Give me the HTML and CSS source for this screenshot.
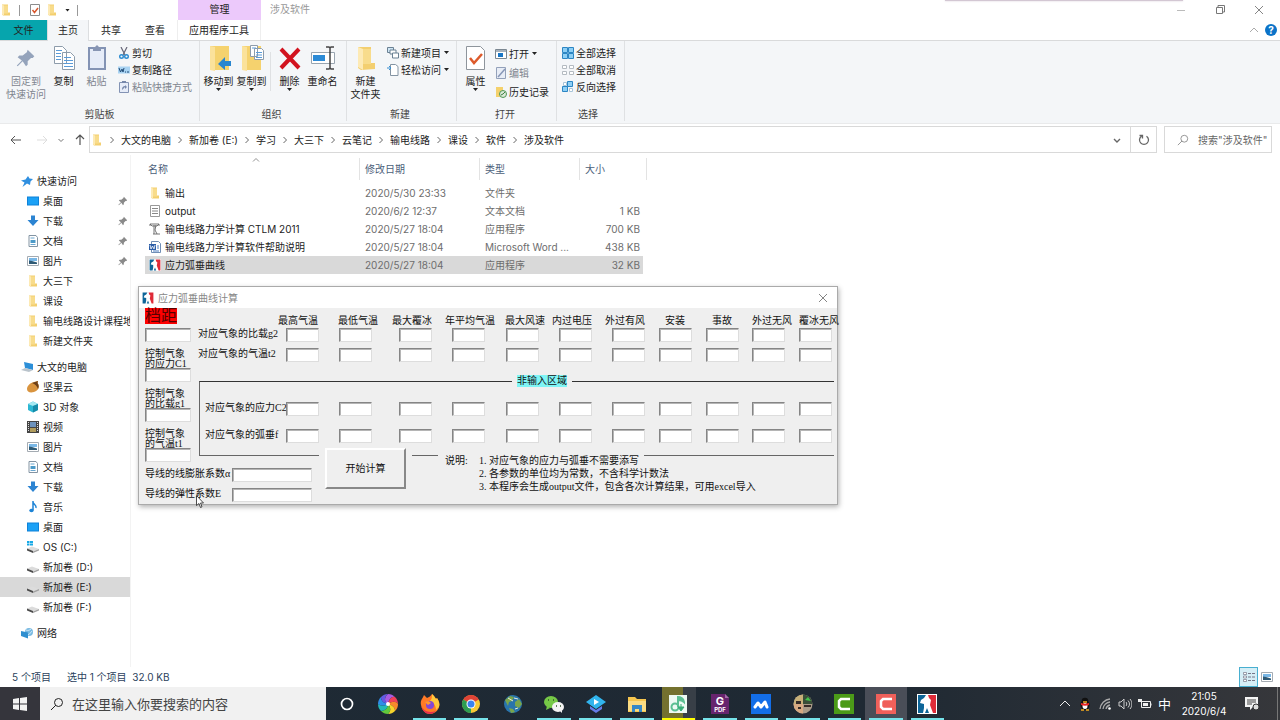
FILE: index.html
```html
<!DOCTYPE html>
<html lang="zh-CN">
<head>
    <meta charset="UTF-8">
    <meta name="viewport" content="width=device-width, initial-scale=1.0">
    <title>涉及软件</title>
    <link rel="stylesheet" href="styles.css">
</head>
<body>
    <!-- Shared icons -->
    <svg class="sprite" aria-hidden="true">
        <symbol id="folder" viewBox="0 0 12 12"><path d="M2 .5h6v8h2v3H3l-1-1z" fill="#f3cf70"/><path d="M2 .5l2 1v10l-2-1z" fill="#fdeab5"/><path d="M4 1.500h4v8H4z" fill="#f8dc8c"/></symbol>
        <symbol id="pin" viewBox="0 0 12 12"><path d="M7 1l4 4-1 1h-1L7 8v2L6 11 4 8 1 11l-.5-.5L3.500 7.500 1 5.500 2 4.500h2L6.500 2.500z" fill="currentColor"/></symbol>
        <symbol id="star" viewBox="0 0 12 12"><path d="M7 1l1.500 2.500L12 4 9.500 6.500 9 10 6 8.500 1.500 12l2-4.500L0 5.500l4.500-1z" fill="#2f8fe0"/></symbol>
        <symbol id="desktop" viewBox="0 0 12 12"><path d="M0 1.500h12v9H0z" fill="#0f82d8"/><path d="M1 2.500h10v7H1z" fill="#1ba1f6"/></symbol>
        <symbol id="down" viewBox="0 0 12 12"><path d="M4 .5h4V5h3.500L6 11 .5 5H4z" fill="#2c84d2"/></symbol>
        <symbol id="doc" viewBox="0 0 12 12"><path d="M2 .5h7l1.500 2v9H2z" fill="#fff" stroke="#8394a3"/><path d="M3.500 3h4M3.500 9.500h5" stroke="#6aa7d0"/><path d="M3.500 5h5v3h-5z" fill="#4c9ac8"/></symbol>
        <symbol id="pic" viewBox="0 0 12 12"><path d="M.5 1.500h11v9H.5z" fill="#fff" stroke="#a4abb2"/><path d="M2 3h8v3H2z" fill="#79b7e6"/><path d="M2 5.500l3 .5 5 1.500V9H2z" fill="#2f5a75"/></symbol>
        <symbol id="drive" viewBox="0 0 12 12"><path d="M0 7.500l5-2 7 2.500-6 2.500z" fill="#dcdcdc"/><path d="M0 7.500L6 10v2L0 9.500z" fill="#4c4c4c"/><path d="M6 10.500L12 8v1.500L6 12z" fill="#a2a2a2"/></symbol>
        <symbol id="nba" viewBox="0 0 20 20"><path d="M0 0h20v20H0z" fill="#fff"/><path d="M1 1h8L7 4 4 6 3 9l4 1v4l-1 5H1z" fill="#0d6598"/><path d="M11 1h8v18h-3l-3-8 1-5-2-2z" fill="#df2b38"/><path d="M8 19l2-5 2 5z" fill="#0d6598"/></symbol>
        <symbol id="chev" viewBox="0 0 6 8"><path d="M1.500 1l3 3-3 3" fill="none" stroke="#666"/></symbol>
        <symbol id="x" viewBox="0 0 10 10"><path d="M1 1l8 8M9 1l-8 8" stroke="#777" fill="none" stroke-width=".9"/></symbol>
        <symbol id="lens" viewBox="0 0 14 14"><path d="M1 13l5-5" stroke="currentColor"/><circle cx="8.500" cy="5.500" r="4" fill="none" stroke="currentColor"/></symbol>
    </svg>

    <div class="top-strip"></div>

    <!-- Title bar -->
    <header class="titlebar">
        <div class="quick">
            <svg class="i12"><use href="#folder"/></svg>
            <i class="bar"></i>
            <svg class="i12" viewBox="0 0 12 12"><path d="M1.500.5h9v11h-9z" fill="#fff" stroke="#8c8c8c"/><path d="M3.500 6l2 2.500L9 4" fill="none" stroke="#d8562c" stroke-width="1.500"/></svg>
            <svg class="i12"><use href="#folder"/></svg>
            <i class="tri"></i>
            <i class="bar"></i>
        </div>
        <div class="manage">管理</div>
        <h1>涉及软件</h1>
        <div class="win-buttons">
            <button aria-label="最小化"><svg class="i10" viewBox="0 0 10 10"><path d="M1 5.500h8" stroke="#bbb"/></svg></button>
            <button aria-label="还原"><svg class="i10" viewBox="0 0 10 10"><path d="M1.500 2.500h6v6h-6zM3 2V.5h6.500V7H8" fill="none" stroke="#777"/></svg></button>
            <button aria-label="关闭"><svg class="i10"><use href="#x"/></svg></button>
        </div>
    </header>
    <nav class="tabs">
        <button class="tab file">文件</button>
        <button class="tab active">主页</button>
        <button class="tab">共享</button>
        <button class="tab">查看</button>
        <button class="tab tools">应用程序工具</button>
        <div class="tab-right">
            <svg class="i10" viewBox="0 0 10 10"><path d="M1 7l4-4 4 4" fill="none" stroke="#aaa"/></svg>
            <button class="help" aria-label="帮助">?</button>
        </div>
    </nav>

    <!-- Ribbon -->
    <section class="ribbon">
        <div class="group g-clip">
            <div class="tools-row">
                <button class="big wide off"><svg viewBox="0 0 12 12" class="i20"><use href="#pin"/></svg>固定到<br>快速访问</button>
                <button class="big"><svg viewBox="0 0 24 28"><path d="M2.500 2.500h8l4 4v13h-12zM10.500 8.500h8l4 4v13h-12z" fill="#fff" stroke="#8d9cab"/><path d="M4 6.500h6M4 9.500h5M4 12.500h5M4 15.500h5M12 13.500h7M12 16.500h9M12 19.500h9M12 22.500h9" stroke="#5a9bd8"/></svg>复制</button>
                <button class="big off"><svg viewBox="0 0 24 28"><path d="M4 4h16v21H4z" fill="#e6ecf8" stroke="#8393b4" stroke-width="2"/><path d="M8 3h2l2-2 2 2h2v4H8z" fill="#8795b3"/></svg>粘贴</button>
                <div class="small-col">
                    <button class="small"><svg class="i12" viewBox="0 0 12 12"><path d="M3 0l4 8M9 0L5 8" stroke="#667" stroke-width="1.200"/><circle cx="3.500" cy="9.500" r="1.800" fill="none" stroke="#2b8bd0" stroke-width="1.400"/><circle cx="8.500" cy="9.500" r="1.800" fill="none" stroke="#2b8bd0" stroke-width="1.400"/></svg>剪切</button>
                    <button class="small"><svg class="i12" viewBox="0 0 12 12"><path d="M0 2.500h12v7H0z" fill="#a9d3f2"/><path d="M1 4l1.500 4L4 5l1 3 1-4M7 8h1M9 8h2" fill="none" stroke="#234d78"/></svg>复制路径</button>
                    <button class="small off"><svg class="i12" viewBox="0 0 12 12"><path d="M1.500 1.500h9v10h-9z" fill="#e6ecf8" stroke="#8393b4"/><path d="M4 0h4v2H4zM4 9c0-3 1-4 3-4V4l2 2-2 2V6" fill="#7788ab"/></svg>粘贴快捷方式</button>
                </div>
            </div>
            <div class="group-name">剪贴板</div>
        </div>
        <div class="group g-org">
            <div class="tools-row">
                <button class="big"><svg viewBox="0 0 24 28"><path d="M3 2h19v24H3z" fill="#f5d26e"/><path d="M3 2l5 1v24l-5-1z" fill="#fbe29b"/><path d="M24 17h-6v-4l-7 7 7 6v-4h6z" fill="#2986cf"/></svg>移动到<i class="tri"></i></button>
                <button class="big"><svg viewBox="0 0 24 28"><path d="M2 2h19v24H2z" fill="#f5d26e"/><path d="M2 2l5 1v24l-5-1z" fill="#fbe29b"/><path d="M10.500 1.500h7v11h-7zM14.500 4.500h7l2 2v9h-9z" fill="#fff" stroke="#8d9cab"/><path d="M16 8.500h6M16 11h6M16 13.500h6M12 4h4" stroke="#5a9bd8"/></svg>复制到<i class="tri"></i></button>
                <i class="ribbon-sep"></i>
                <button class="big"><svg viewBox="0 0 24 28"><path d="M3 5l18 19M21 5L3 24" stroke="#d2131f" stroke-width="4"/></svg>删除<i class="tri"></i></button>
                <button class="big"><svg viewBox="0 0 24 28"><path d="M.5 8.500h23v11H.5z" fill="#fff" stroke="#99a5b0"/><path d="M2 11h12v6H2z" fill="#2b8ad6"/><path d="M15 3h3l1 1 1-1h3M15 25h3l1-1 1 1h3M19 4v20" fill="none" stroke="#444" stroke-width="1.500"/></svg>重命名</button>
            </div>
            <div class="group-name">组织</div>
        </div>
        <div class="group g-new">
            <div class="tools-row">
                <button class="big"><svg viewBox="0 0 24 28"><path d="M4 3h13v16h4v6l-14 1-3-2z" fill="#f3cf70"/><path d="M4 3l5 2v21l-5-3z" fill="#fdeab5"/><path d="M9 5h8v15H9z" fill="#f8dc8c"/></svg>新建<br>文件夹</button>
                <div class="small-col">
                    <button class="small"><svg class="i12" viewBox="0 0 12 12"><path d="M.5.5h6v5h-6z" fill="#cfe6f5" stroke="#6b8193"/><path d="M3 3h6v4H3z" fill="#fff" stroke="#6b8193"/><path d="M5.500 6h6v5h-6z" fill="#fff" stroke="#6b8193"/></svg>新建项目<i class="tri"></i></button>
                    <button class="small"><svg class="i12" viewBox="0 0 12 12"><path d="M3.500.5h5l2.500 2v9H3.500z" fill="#fff" stroke="#8494a3"/><path d="M0 4h4M2 2l2 2-2 2" fill="none" stroke="#3a8fd0"/></svg>轻松访问<i class="tri"></i></button>
                </div>
            </div>
            <div class="group-name">新建</div>
        </div>
        <div class="group g-open">
            <div class="tools-row">
                <button class="big"><svg viewBox="0 0 24 28"><path d="M2.500 2.500h14l4 4v19h-18z" fill="#fff" stroke="#8e959c"/><path d="M6 14l4 5 8-9" fill="none" stroke="#dd5a2b" stroke-width="2.500"/></svg>属性<i class="tri"></i></button>
                <div class="small-col tall">
                    <button class="small"><svg class="i12" viewBox="0 0 12 12"><path d="M.5 1.500h11v9H.5z" fill="#fff" stroke="#7b8791"/><path d="M1 2h10v2H1z" fill="#a7b2bc"/><path d="M3 5h5v4H3z" fill="#1976c5"/></svg>打开<i class="tri"></i></button>
                    <button class="small off"><svg class="i12" viewBox="0 0 12 12"><path d="M1.500.5h9v11h-9z" fill="#e8edf6" stroke="#93a1ba"/><path d="M3 10l7-8" stroke="#8797b7" stroke-width="1.500"/></svg>编辑</button>
                    <button class="small"><svg class="i12" viewBox="0 0 12 12"><path d="M1 1h7v10H1z" fill="#f4d16c"/><circle cx="8" cy="8" r="3.500" fill="#dbe9d8" stroke="#4e9655"/><path d="M6 9l2-1 2-2" fill="none" stroke="#3b7f42"/></svg>历史记录</button>
                </div>
            </div>
            <div class="group-name">打开</div>
        </div>
        <div class="group g-select">
            <div class="tools-row">
                <div class="small-col">
                    <button class="small"><svg class="i12" viewBox="0 0 12 12"><path d="M.5.5h5v5h-5zM6.500.5h5v5h-5zM.5 6.500h5v5h-5zM6.500 6.500h5v5h-5z" fill="#8dcff5" stroke="#2c86c4"/></svg>全部选择</button>
                    <button class="small"><svg class="i12" viewBox="0 0 12 12"><path d="M.5 1.500h4v3h-4zM7.500 1.500h4v3h-4zM.5 7.500h4v3h-4zM7.500 7.500h4v3h-4z" fill="#fff" stroke="#b4bbc1"/></svg>全部取消</button>
                    <button class="small"><svg class="i12" viewBox="0 0 12 12"><path d="M5.500.5h5v5h-5zM.5 5.500h5v5h-5z" fill="#8dcff5" stroke="#2c86c4"/><path d="M1.500 1.500h3v3h-3zM7.500 7.500h3v3h-3z" fill="#fff" stroke="#a8c4d8"/></svg>反向选择</button>
                </div>
            </div>
            <div class="group-name">选择</div>
        </div>
    </section>

    <!-- Address bar -->
    <div class="address-row">
        <div class="nav-arrows">
            <svg class="i12" viewBox="0 0 12 12"><path d="M11 6H1M5 2L1 6l4 4" fill="none" stroke="#555"/></svg>
            <svg class="i12" viewBox="0 0 12 12"><path d="M1 6h10M7 2l4 4-4 4" fill="none" stroke="#ddd"/></svg>
            <svg class="i6" viewBox="0 0 6 6"><path d="M.5 2L3 4.500 5.500 2" fill="none" stroke="#777"/></svg>
            <svg class="i12" viewBox="0 0 12 12"><path d="M6 11V1M2 5l4-4 4 4" fill="none" stroke="#555" stroke-width="1.200"/></svg>
        </div>
        <nav class="crumbs">
            <svg class="i12"><use href="#folder"/></svg>
            <svg class="chev"><use href="#chev"/></svg><a href="#">大文的电脑</a>
            <svg class="chev"><use href="#chev"/></svg><a href="#">新加卷 (E:)</a>
            <svg class="chev"><use href="#chev"/></svg><a href="#">学习</a>
            <svg class="chev"><use href="#chev"/></svg><a href="#">大三下</a>
            <svg class="chev"><use href="#chev"/></svg><a href="#">云笔记</a>
            <svg class="chev"><use href="#chev"/></svg><a href="#">输电线路</a>
            <svg class="chev"><use href="#chev"/></svg><a href="#">课设</a>
            <svg class="chev"><use href="#chev"/></svg><a href="#">软件</a>
            <svg class="chev"><use href="#chev"/></svg><a href="#">涉及软件</a>
            <button class="history" aria-label="历史位置"><svg class="i10" viewBox="0 0 10 10"><path d="M2 4l3 3 3-3" fill="none" stroke="#666" stroke-width="1.400"/></svg></button>
            <button class="refresh" aria-label="刷新"><svg class="i12" viewBox="0 0 12 12"><path d="M8.500 2.200a4.500 4.500 0 1 1-5 0M1.500 1.500h3v3" fill="none" stroke="#666" stroke-width="1.300"/></svg></button>
        </nav>
        <label class="search">
            <svg class="i12"><use href="#lens"/></svg>
            <input type="text" placeholder='搜索"涉及软件"' aria-label="搜索">
        </label>
    </div>

    <main class="main">
        <aside class="sidebar">
            <ul>
                <li class="head"><svg class="i12"><use href="#star"/></svg>快速访问</li>
                <li><svg class="i12"><use href="#desktop"/></svg>桌面<svg class="pin"><use href="#pin"/></svg></li>
                <li><svg class="i12"><use href="#down"/></svg>下载<svg class="pin"><use href="#pin"/></svg></li>
                <li><svg class="i12"><use href="#doc"/></svg>文档<svg class="pin"><use href="#pin"/></svg></li>
                <li><svg class="i12"><use href="#pic"/></svg>图片<svg class="pin"><use href="#pin"/></svg></li>
                <li><svg class="i12"><use href="#folder"/></svg>大三下</li>
                <li><svg class="i12"><use href="#folder"/></svg>课设</li>
                <li><svg class="i12"><use href="#folder"/></svg>输电线路设计课程地</li>
                <li><svg class="i12"><use href="#folder"/></svg>新建文件夹</li>
            </ul>
            <ul>
                <li class="head"><svg class="i12" viewBox="0 0 12 12"><path d="M3 1l9 2v6L4 7z" fill="#2c8fd8"/><path d="M0 9l4-2 8 2-4 2z" fill="#b9c3cb"/></svg>大文的电脑</li>
                <li><svg class="i12" viewBox="0 0 12 12"><path d="M0 8c0-3 3-6 7-7l4-1-.5 2C13 5 12 10 7 11c-4 1-7 0-7-3z" fill="#d9943e"/><path d="M5 2l6-2-.5 2C12 4 12 6 11 8 10 5 8 3 5 2z" fill="#6e4018"/></svg>坚果云</li>
                <li><svg class="i12" viewBox="0 0 12 12"><path d="M1 3l5-2.500L11 3v6l-5 2.500L1 9z" fill="#2cb7d3"/><path d="M1 3l5-2.500L11 3 6 5z" fill="#a6e8f2"/><path d="M6 5l5-2v6l-5 2.500z" fill="#168ba9"/></svg>3D 对象</li>
                <li><svg class="i12" viewBox="0 0 12 12"><path d="M0 0h12v12H0z" fill="#444"/><path d="M3 1h6v5H3z" fill="#6d93bd"/><path d="M3 7h6v4H3z" fill="#b09c5c"/><path d="M1.500 1v10M10.500 1v10" stroke="#ddd" stroke-dasharray="1 1"/></svg>视频</li>
                <li><svg class="i12"><use href="#pic"/></svg>图片</li>
                <li><svg class="i12"><use href="#doc"/></svg>文档</li>
                <li><svg class="i12"><use href="#down"/></svg>下载</li>
                <li><svg class="i12" viewBox="0 0 12 12"><path d="M6 0v9M6 1c0 2 4 3 3 6" fill="none" stroke="#1c83d6" stroke-width="1.500"/><ellipse cx="4.500" cy="9.500" rx="2.200" ry="1.800" fill="#1c83d6"/></svg>音乐</li>
                <li><svg class="i12"><use href="#desktop"/></svg>桌面</li>
                <li><svg class="i12" viewBox="0 0 12 12"><use href="#drive"/><path d="M0 0h2.500v2H0zM3 0h3v2H3zM0 2.500h2.500v2H0zM3 2.500h3v2H3z" fill="#18a9e6"/></svg>OS (C:)</li>
                <li><svg class="i12"><use href="#drive"/></svg>新加卷 (D:)</li>
                <li class="selected"><svg class="i12"><use href="#drive"/></svg>新加卷 (E:)</li>
                <li><svg class="i12"><use href="#drive"/></svg>新加卷 (F:)</li>
            </ul>
            <ul>
                <li class="head"><svg class="i12" viewBox="0 0 12 12"><circle cx="8" cy="5" r="4" fill="#78b9e2"/><path d="M5 3c2 1 4 0 5-1M7 8c2-1 3-3 4-4" fill="none" stroke="#cfe9f8"/><path d="M0 4l7 1.500v6L0 9z" fill="#2f8fd0"/></svg>网络</li>
            </ul>
        </aside>

        <div class="content">
            <table class="files">
                <colgroup><col class="c-name"><col class="c-date"><col class="c-type"><col class="c-size"><col class="c-end"></colgroup>
                <thead>
                    <tr>
                        <th class="sorted">名称<svg class="sort" viewBox="0 0 8 4"><path d="M1 3.500l3-3 3 3" fill="none" stroke="#777" stroke-width=".8"/></svg></th>
                        <th>修改日期</th><th>类型</th><th colspan="2">大小</th>
                    </tr>
                </thead>
                <tbody>
                    <tr><td><svg class="i12"><use href="#folder"/></svg>输出</td><td>2020/5/30 23:33</td><td>文件夹</td><td></td></tr>
                    <tr><td><svg class="i12" viewBox="0 0 12 12"><path d="M1.500.5h9v11h-9z" fill="#fff" stroke="#999"/><path d="M3 3.500h6M3 6h6M3 8.500h6" stroke="#888"/></svg>output</td><td>2020/6/2 12:37</td><td>文本文档</td><td>1 KB</td></tr>
                    <tr><td><svg class="i12" viewBox="0 0 12 12"><path d="M1 1h9l-2 2H3zM1 1v2M10 1v2M5 2v9M7 2l-1 5 2 4M4 11h7" fill="none" stroke="#666" stroke-width=".9"/></svg>输电线路力学计算 CTLM 2011</td><td>2020/5/27 18:04</td><td>应用程序</td><td>700 KB</td></tr>
                    <tr><td><svg class="i12" viewBox="0 0 12 12"><path d="M2.500.5h7l2 2v9h-9z" fill="#fff" stroke="#6f8db5"/><path d="M0 3h7v6H0z" fill="#2b5da8"/><path d="M1 4l1 4 1.500-3L5 8l1-4" fill="none" stroke="#fff" stroke-width=".8"/><path d="M8 5h2M8 7h2M4 10h6" stroke="#4c7cc0"/></svg>输电线路力学计算软件帮助说明</td><td>2020/5/27 18:04</td><td>Microsoft Word ...</td><td>438 KB</td></tr>
                    <tr class="selected"><td><svg class="i12"><use href="#nba"/></svg>应力弧垂曲线</td><td>2020/5/27 18:04</td><td>应用程序</td><td>32 KB</td></tr>
                </tbody>
            </table>
        </div>
    </main>

    <footer class="status">
        <span>5 个项目</span><span>选中 1 个项目&nbsp; 32.0 KB</span>
        <div class="views">
            <button class="on" aria-label="详细信息"><svg viewBox="0 0 14 14"><path d="M1.500 2.500h3v2h-3zM1.500 6h3v2h-3zM1.500 9.500h3v2h-3z" fill="#fff" stroke="#778" stroke-width=".7"/><path d="M6 3.500h3M10 3.500h3M6 7h3M10 7h3M6 10.500h3M10 10.500h3" stroke="#778"/></svg></button>
            <button aria-label="大图标"><svg class="i12"><use href="#pic"/></svg></button>
        </div>
    </footer>

    <!-- Calculator window -->
    <section class="dialog">
        <header class="dialog-title">
            <svg class="i12"><use href="#nba"/></svg>
            <h2>应力弧垂曲线计算</h2>
            <button aria-label="关闭"><svg class="i10"><use href="#x"/></svg></button>
        </header>
        <form class="dialog-body">
            <div class="inputs">
                <div class="controls">
                    <label class="span-label" for="span">档距</label>
                    <input id="span" type="text">
                    <label for="c1">控制气象<br>的应力C1</label>
                    <input id="c1" type="text">
                    <label for="g1">控制气象<br>的比载g1</label>
                    <input id="g1" type="text">
                    <label for="t1">控制气象<br>的气温t1</label>
                    <input id="t1" type="text">
                </div>
                <div class="weather">
                    <div class="names">
                        <span>最高气温</span><span>最低气温</span><span>最大覆冰</span><span>年平均气温</span><span>最大风速</span><span>内过电压</span><span>外过有风</span><span class="short">安装</span><span class="short">事故</span><span>外过无风</span><span>覆冰无风</span>
                    </div>
                    <div class="row">
                        <label for="g2">对应气象的比载g2</label>
                        <input id="g2" type="text"><input type="text" aria-label="g2 最低气温"><input type="text" aria-label="g2 最大覆冰"><input type="text" aria-label="g2 年平均气温"><input type="text" aria-label="g2 最大风速"><input type="text" aria-label="g2 内过电压"><input type="text" aria-label="g2 外过有风"><input type="text" aria-label="g2 安装"><input type="text" aria-label="g2 事故"><input type="text" aria-label="g2 外过无风"><input type="text" aria-label="g2 覆冰无风">
                    </div>
                    <div class="row">
                        <label for="t2">对应气象的气温t2</label>
                        <input id="t2" type="text"><input type="text" aria-label="t2 最低气温"><input type="text" aria-label="t2 最大覆冰"><input type="text" aria-label="t2 年平均气温"><input type="text" aria-label="t2 最大风速"><input type="text" aria-label="t2 内过电压"><input type="text" aria-label="t2 外过有风"><input type="text" aria-label="t2 安装"><input type="text" aria-label="t2 事故"><input type="text" aria-label="t2 外过无风"><input type="text" aria-label="t2 覆冰无风">
                    </div>
                    <fieldset>
                        <legend><span>非输入区域</span></legend>
                        <div class="row">
                            <label for="c2">对应气象的应力C2</label>
                            <input id="c2" type="text"><input type="text" aria-label="C2 最低气温"><input type="text" aria-label="C2 最大覆冰"><input type="text" aria-label="C2 年平均气温"><input type="text" aria-label="C2 最大风速"><input type="text" aria-label="C2 内过电压"><input type="text" aria-label="C2 外过有风"><input type="text" aria-label="C2 安装"><input type="text" aria-label="C2 事故"><input type="text" aria-label="C2 外过无风"><input type="text" aria-label="C2 覆冰无风">
                        </div>
                        <div class="row">
                            <label for="f">对应气象的弧垂f</label>
                            <input id="f" type="text"><input type="text" aria-label="f 最低气温"><input type="text" aria-label="f 最大覆冰"><input type="text" aria-label="f 年平均气温"><input type="text" aria-label="f 最大风速"><input type="text" aria-label="f 内过电压"><input type="text" aria-label="f 外过有风"><input type="text" aria-label="f 安装"><input type="text" aria-label="f 事故"><input type="text" aria-label="f 外过无风"><input type="text" aria-label="f 覆冰无风">
                        </div>
                    </fieldset>
                </div>
            </div>
            <div class="bottom">
                <div class="coeffs">
                    <label for="alpha">导线的线膨胀系数α</label><input id="alpha" type="text">
                    <label for="e">导线的弹性系数E</label><input id="e" type="text">
                </div>
                <div class="run"><button type="button">开始计算</button></div>
                <div class="notes">
                    <span class="notes-head">说明:</span>
                    <div>
                        <p><span>1. 对应气象的应力与弧垂不需要添写</span></p>
                        <p>2. 各参数的单位均为常数，不含科学计数法</p>
                        <p>3. 本程序会生成output文件，包含各次计算结果，可用excel导入</p>
                    </div>
                </div>
            </div>
        </form>
        <svg class="cursor" viewBox="0 0 8 13"><path d="M.5.5v10l2.500-2 1.500 4 1.500-.7L4.500 8h3z" fill="#fff" stroke="#222" stroke-width=".8"/></svg>
    </section>

    <!-- Taskbar -->
    <div class="taskbar">
        <button class="start" aria-label="开始"><svg viewBox="0 0 14 14"><path d="M0 2l6-1v5.500H0zM7 .9L14 0v6.500H7zM0 7.500h6V13l-6-1zM7 7.500h7V14l-7-.9z" fill="#f2f2f2"/></svg></button>
        <label class="task-search">
            <svg><use href="#lens"/></svg>
            <input type="text" placeholder="在这里输入你要搜索的内容" aria-label="搜索">
        </label>
        <div class="apps">
            <button aria-label="Cortana"><svg viewBox="0 0 20 20"><circle cx="10" cy="10" r="5.500" fill="none" stroke="#fff" stroke-width="1.700"/></svg></button>
            <button aria-label="浏览器"><svg viewBox="0 0 20 20"><path d="M10 10C6 8 6 3 10 0c3 0 5 1 7 3-3-1-6 2-7 7z" fill="#a95be0"/><path d="M10 10c1-5 4-8 7-7 2 2 3 4 3 7-2-3-6-3-10 0z" fill="#f0405a"/><path d="M10 10c4-3 8-3 10 0 0 3-1 5-3 7 0-4-3-6-7-7z" fill="#f7892b"/><path d="M10 10c4 1 7 3 7 7-2 2-4 3-7 3 3-3 3-6 0-10z" fill="#f5d32c"/><path d="M10 10c3 4 3 7 0 10-3 0-5-1-7-3 4 0 7-3 7-7z" fill="#60c83c"/><path d="M10 10c0 4-3 7-7 7-2-2-3-4-3-7 3 2 6 2 10 0z" fill="#22b9b7"/><path d="M10 10c-4 2-7 2-10 0 0-3 1-5 3-7 0 4 3 6 7 7z" fill="#2e8de8"/><path d="M10 10C6 9 3 7 3 3c2-2 4-3 7-3-4 3-4 7 0 10z" fill="#635ae2"/><circle cx="10" cy="10" r="2" fill="#fff"/></svg></button>
            <button class="open" aria-label="Firefox"><svg viewBox="0 0 20 20"><path d="M1 11C0 6 3 4 4 1c1 1 2 2 3 3 2-1 4-2 5-4 2 2 3 3 4 5l1-1c2 3 3 6 2 9-1 4-5 7-9 7s-8-3-9-9z" fill="#ff7a27"/><path d="M12 0c2 2 3 3 4 5l1-1c2 3 3 6 2 9l-3 3c0-5-3-8-6-9 2-2 2-4 2-7z" fill="#ffc93c"/><path d="M1 11c2 7 9 8 15 6-2 2-4 3-6 3-4 0-8-3-9-9z" fill="#e6304d"/><circle cx="10" cy="11" r="4" fill="#8448d6"/><path d="M5 8c3-1 4-1 6 1l-3 2z" fill="#ff9a2e"/></svg></button>
            <button class="open" aria-label="Chrome"><svg viewBox="0 0 20 20"><circle cx="10" cy="10" r="9" fill="#f9c934"/><path d="M10 10L2.200 5.500a9 9 0 0 1 15.600 0z" fill="#e04336"/><path d="M10 10l0 9A9 9 0 0 1 2.200 5.500z" fill="#2e9d52"/><circle cx="10" cy="10" r="4.500" fill="#fff"/><circle cx="10" cy="10" r="3.500" fill="#3b82ee"/></svg></button>
            <button aria-label="地球"><svg viewBox="0 0 20 20"><circle cx="10" cy="10" r="9" fill="#2974ab"/><path d="M2 6l5-4 4 1-2 4-3 1-1 4zM12 8l4-3 3 5-3 4-4-2zM6 14l4 1 2 3-4 1z" fill="#79a54c"/><path d="M5 4l5 3M11 4l4 1M12 15l3-1" stroke="#e8edda"/></svg></button>
            <button class="open" aria-label="微信"><svg viewBox="0 0 20 20"><ellipse cx="7" cy="8" rx="7" ry="6" fill="#76c947"/><path d="M3 12l-1 4 4-2z" fill="#76c947"/><ellipse cx="14" cy="13" rx="6" ry="5" fill="#f4f4f4"/><path d="M16 17l2 2v-3z" fill="#f4f4f4"/><path d="M4 6h1M9 6h1M12 12h1M16 12h1" stroke="#34512a" stroke-width="1.500"/></svg></button>
            <button class="open" aria-label="播放器"><svg viewBox="0 0 20 20"><path d="M4 12l6 4 6-4v3l-6 4-6-4z" fill="#657ce8"/><path d="M0 8l10-7 10 7-10 7z" fill="#31b5ee"/><path d="M8 5l5 3-5 3z" fill="#fff"/></svg></button>
            <button class="open" aria-label="文件资源管理器"><svg viewBox="0 0 20 20"><path d="M1 3h7l2 2h9v13H1z" fill="#f6c64f"/><path d="M1 7h18v10H1z" fill="#fbdc83"/><path d="M5 11h10v7h-3v-3H8v3H5z" fill="#3688c7"/></svg></button>
            <button class="open music" aria-label="音乐"><svg viewBox="0 0 20 20"><path d="M1 1h18v18H1z" fill="#eefaf3"/><path d="M10 3v10M10 3c2 0 6 1 6 5-2-2-4-2-6-2z" fill="#5cbf92" stroke="#5cbf92" stroke-width="2"/><circle cx="7" cy="13" r="3.500" fill="none" stroke="#5cbf92" stroke-width="2"/><path d="M13 10v4M10 13h6l-3 4z" fill="#38ad77" stroke="#38ad77"/></svg></button>
            <button class="open" aria-label="PDF"><svg viewBox="0 0 20 20"><path d="M1 0h14l4 4v16H1z" fill="#67246e"/><path d="M15 0v4h4z" fill="#a56ba9"/><text x="10" y="11" class="logo-g">G</text><text x="10" y="18" class="logo-pdf">PDF</text></svg></button>
            <button class="open" aria-label="Maxthon"><svg viewBox="0 0 20 20"><path d="M0 0h20v20H0z" fill="#136ee8"/><path d="M4 13l3-4 3 4 4-5 2 5" fill="none" stroke="#fff" stroke-width="3" stroke-linecap="round" stroke-linejoin="round"/></svg></button>
            <button class="open" aria-label="游戏"><svg viewBox="0 0 20 20"><circle cx="10" cy="10" r="9.500" fill="#a99b88"/><path d="M10 .5V10H.5A9.500 9.500 0 0 1 10 .5z" fill="#c7b079"/><path d="M10 .5A9.500 9.500 0 0 1 19.500 10H10z" fill="#384e38"/><path d="M.5 10H10v9.500A9.500 9.500 0 0 1 .5 10z" fill="#d7a982"/><path d="M3 7h5v3H3zM11 11h7v2h-7zM5 13h3v2H5z" fill="#352b28"/><path d="M12 6l3-3 3 4z" fill="#45c54c"/></svg></button>
            <button class="open" aria-label="Camtasia"><svg viewBox="0 0 20 20"><path d="M0 0h20v20H0z" fill="#4b9a18"/><path d="M16 5H7L5 7v6l2 2h9" fill="none" stroke="#fff" stroke-width="2.500"/></svg></button>
            <button class="open active" aria-label="Camtasia Recorder"><svg viewBox="0 0 20 20"><path d="M0 0h20v20H0z" fill="#f0605a"/><path d="M16 5H7L5 7v6l2 2h9" fill="none" stroke="#fff" stroke-width="2.500"/></svg></button>
            <button class="open" aria-label="应力弧垂曲线"><svg><use href="#nba"/></svg></button>
        </div>
        <div class="tray">
            <svg viewBox="0 0 14 14"><path d="M2 9l5-5 5 5" fill="none" stroke="#eee"/></svg>
            <svg viewBox="0 0 14 14"><ellipse cx="7" cy="8" rx="4.500" ry="5" fill="#111"/><circle cx="7" cy="4" r="3.300" fill="#111"/><ellipse cx="7" cy="9" rx="2.500" ry="3" fill="#fff"/><path d="M3 6c3 1 5 1 8 0v2c-3 1-5 1-8 0z" fill="#e22"/><path d="M5 5h4M3 13h3M8 13h3" stroke="#f2a91e" stroke-width="1.500"/></svg>
            <svg viewBox="0 0 14 14"><path d="M2 12A11 11 0 0 1 12 2M5 12a8 8 0 0 1 7-7M8 12a5 5 0 0 1 4-4" fill="none" stroke="#aaa" stroke-width="1.300"/><circle cx="11.500" cy="11.500" r="1.300" fill="#fff"/></svg>
            <svg viewBox="0 0 14 14"><path d="M1 5h2l3-3v10L3 9H1zM8 5c1 1 1 3 0 4M10 3.500c2 2 2 5 0 7M12 2c2.500 3 2.500 7 0 10" fill="none" stroke="#ccc"/></svg>
            <svg viewBox="0 0 14 14"><path d="M3.500 4.500h9v6h-9zM13 6.500v2" fill="none" stroke="#eee"/><path d="M5 6h5v3H5zM0 2h4v3H0z" fill="#eee"/></svg>
            <span class="ime">中</span>
            <div class="clock">21:05<br>2020/6/4</div>
            <svg viewBox="0 0 14 14" class="notice"><path d="M0 0h13v10H8l-3 3v-3H0z" fill="#f4f4f4"/><path d="M2 3h9M2 5h9M2 7h5" stroke="#444"/><circle cx="11" cy="10" r="3" fill="#ddd" stroke="#333"/></svg>
        </div>
    </div>
</body>
</html>
```
FILE: styles.css
```css
* {
    box-sizing: border-box;
}
body {
    margin: 0;
    min-height: 100vh;
    display: flex;
    flex-direction: column;
    position: relative;
    overflow: hidden;
    background: #fff;
    color: #222;
    font-family: Inter, "Noto Sans CJK SC", sans-serif;
    font-size: 10px;
    line-height: 14px;
}
h1, h2, p, ul {
    margin: 0;
    padding: 0;
    font-size: inherit;
    font-weight: normal;
}
button, input {
    font: inherit;
    color: inherit;
    margin: 0;
    padding: 0;
    border: 0;
    border-radius: 0;
    background: none;
}
a {
    color: inherit;
    text-decoration: none;
}
svg {
    display: block;
    flex: none;
}
.sprite {
    position: absolute;
    width: 0;
    height: 0;
}
.i6 { width: 6px; height: 6px; }
.i10 { width: 10px; height: 10px; }
.i12 { width: 12px; height: 12px; }
.bar {
    width: 1px;
    height: 11px;
    background: #999;
}
.tri {
    flex: none;
    width: 5px;
    height: 3px;
    background: #222;
    clip-path: polygon(0 0, 100% 0, 50% 100%);
}
.top-strip {
    position: absolute;
    top: 0;
    right: 97px;
    width: 238px;
    height: 1px;
    background: #d3c7d3;
    box-shadow: 0 0 2px #cbbccb;
}

/* Title bar and tabs */
.titlebar {
    display: flex;
    height: 20px;
    line-height: 19px;
}
.quick {
    width: 178px;
    display: flex;
    align-items: center;
    gap: 7px;
}
.quick .i12 + .i12 {
    margin-left: -2px;
}
.quick .bar {
    margin-right: 2px;
}
.manage {
    width: 83px;
    text-align: center;
    background: #ecc9fb;
}
.titlebar h1 {
    margin-left: 9px;
    color: #999;
}
.win-buttons {
    display: flex;
    margin-left: auto;
    margin-right: 2px;
}
.win-buttons button {
    width: 39px;
    display: grid;
    place-items: center;
}
.tabs {
    display: flex;
    height: 20px;
    line-height: 19px;
}
.tab {
    width: 44px;
    text-align: center;
}
.tab.file {
    width: 47px;
    background: #06a5ad;
}
.tab.active {
    width: 42px;
    height: 21px;
    background: #f4f6f8;
    border: 1px solid #dcdee0;
    border-width: 0 1px;
    z-index: 1;
}
.tab.tools {
    width: 84px;
    border: 1px solid #eee;
    border-width: 0 1px;
}
.tab-right {
    display: flex;
    align-items: center;
    gap: 6px;
    margin-left: auto;
    margin-right: 3px;
}
.help {
    width: 12px;
    height: 12px;
    border-radius: 50%;
    background: #0b73c8;
    color: #fff;
    font-weight: bold;
    line-height: 12px;
}

/* Ribbon */
.ribbon {
    display: flex;
    height: 84px;
    background: #f4f6f8;
    border-top: 1px solid #d9dadb;
    border-bottom: 1px solid #e9eaeb;
}
.group {
    display: flex;
    flex-direction: column;
    justify-content: space-between;
    padding: 3px 0 0 2px;
    border-right: 1px solid #dfe1e3;
    height: 80px;
}
.g-clip { width: 200px; padding-left: 5px; }
.g-org { width: 147px; }
.g-new { width: 110px; }
.g-open { width: 100px; }
.g-select { width: 68px; padding-left: 0; }
.tools-row {
    display: flex;
}
.group-name {
    text-align: center;
    padding-right: 5px;
    color: #444;
}
.big {
    width: 33px;
    display: flex;
    flex-direction: column;
    align-items: center;
    line-height: 13px;
    white-space: nowrap;
}
.big svg {
    width: 24px;
    height: 28px;
    margin-bottom: 3px;
}
.big .i20 {
    width: 20px;
    height: 20px;
    margin: 4px 0 7px;
    color: #94a3bb;
}
.big.wide {
    width: 42px;
}
.off {
    color: #7f858f;
}
.ribbon-sep {
    width: 1px;
    margin: 8px 2px 0;
    background: #dfe1e3;
}
.small-col {
    display: flex;
    flex-direction: column;
    margin-left: 5px;
}
.small {
    display: flex;
    align-items: center;
    gap: 2px;
    height: 17px;
    white-space: nowrap;
}
.small .tri {
    margin-left: 1px;
}
.tall {
    margin-left: 3px;
}
.tall .small {
    height: 19px;
}

/* Address bar */
.address-row {
    display: flex;
    height: 31px;
    padding: 2px 8px 2px 10px;
}
.nav-arrows {
    display: flex;
    align-items: center;
    width: 79px;
    gap: 14px;
}
.nav-arrows .i6 + .i12,
.nav-arrows .i12 + .i6 {
    margin-left: -4px;
}
.crumbs {
    flex: 1;
    display: flex;
    align-items: center;
    padding-left: 1px;
    border: 1px solid #d9d9d9;
    white-space: nowrap;
}
.chev {
    width: 6px;
    height: 8px;
    margin: 0 6px;
}
.history {
    width: 26px;
    height: 100%;
    margin-left: auto;
    display: grid;
    place-items: center;
}
.refresh {
    width: 26px;
    height: 100%;
    display: grid;
    place-items: center;
    border-left: 1px solid #d9d9d9;
}
.search {
    width: 108px;
    margin-left: 7px;
    padding-left: 12px;
    display: flex;
    align-items: center;
    gap: 9px;
    border: 1px solid #d9d9d9;
    color: #888;
}
.search input {
    flex: 1;
    min-width: 0;
}
.search input::placeholder {
    color: #666;
}

/* Sidebar */
.main {
    flex: 1;
    display: flex;
}
.sidebar {
    width: 131px;
    padding-top: 16px;
    overflow: hidden;
    border-right: 1px solid #f3f3f3;
}
.sidebar ul {
    list-style: none;
    margin-bottom: 6px;
}
.sidebar li {
    display: flex;
    align-items: center;
    gap: 4px;
    height: 20px;
    padding-left: 27px;
    white-space: nowrap;
}
.sidebar .head {
    padding-left: 21px;
}
.pin {
    width: 10px;
    height: 10px;
    margin-left: auto;
    margin-right: 2px;
    color: #8a8a8a;
}
.selected {
    background: #d9d9d9;
}

/* File list */
.content {
    flex: 1;
    padding: 3px 0 0 14px;
}
.files {
    width: 502px;
    table-layout: fixed;
    border-spacing: 0;
}
.c-name { width: 215px; }
.c-date { width: 120px; }
.c-type { width: 100px; }
.c-size { width: 63px; }
.c-end { width: 4px; }
.files th {
    position: relative;
    height: 22px;
    padding: 0 5px;
    border-right: 1px solid #e3e3e3;
    text-align: left;
    font-weight: normal;
    color: #4c607a;
}
.files th:first-child {
    padding-left: 3px;
}
.sort {
    position: absolute;
    top: 0;
    left: 50%;
    width: 8px;
    height: 4px;
}
.files tbody::before {
    content: "";
    display: block;
    height: 4px;
}
.files td {
    height: 18px;
    padding: 0 0 0 5px;
    color: #6d6d6d;
    white-space: nowrap;
}
.files td:first-child {
    display: flex;
    align-items: center;
    gap: 4px;
    padding-left: 4px;
    color: #222;
}
.files td:last-child {
    padding-right: 3px;
    text-align: right;
}

/* Status bar */
.status {
    display: flex;
    align-items: center;
    gap: 16px;
    height: 20px;
    padding-left: 12px;
    color: #2b3f5c;
}
.views {
    display: flex;
    align-self: stretch;
    margin-left: auto;
    margin-right: 4px;
}
.views button {
    width: 18px;
    display: grid;
    place-items: center;
}
.views .on {
    width: 19px;
    background: #d5eef6;
    border: 1px solid #48afd0;
}
.views .on svg {
    width: 14px;
    height: 14px;
}

/* Calculator window */
.dialog {
    position: absolute;
    left: 138px;
    top: 286px;
    width: 700px;
    background: #efefef;
    border: 1px solid #aaa;
    box-shadow: 1px 2px 5px rgba(0, 0, 0, 0.3);
    color: #111;
    white-space: nowrap;
}
.dialog-title {
    display: flex;
    align-items: center;
    gap: 4px;
    height: 21px;
    padding: 0 9px 0 3px;
    background: #fff;
    color: #888;
}
.dialog-title button {
    margin-left: auto;
}
.dialog-body {
    padding: 0 0 2px 6px;
    font-family: "Liberation Serif", "Noto Sans CJK SC", serif;
    line-height: 10px;
}
.dialog-body input {
    width: 33px;
    height: 14px;
    background: #fff;
    border: 1px solid;
    border-color: #858585 #ddd #ddd #858585;
    box-shadow: inset 1px 1px #b5b5b5;
}
.inputs {
    display: flex;
    gap: 7px;
}
.controls {
    display: flex;
    flex-direction: column;
    width: 46px;
}
.controls label {
    height: 20px;
    padding-top: 1px;
}
.controls input {
    width: 46px;
    margin-bottom: 6px;
}
.controls input:last-child {
    margin-bottom: 0;
}
.controls .span-label {
    align-self: flex-start;
    height: 16px;
    margin-bottom: 4px;
    padding-top: 0;
    background: #f00;
    color: #500;
    font-size: 16px;
    line-height: 16px;
}
.weather {
    flex: 1;
    padding-top: 8px;
}
.names {
    display: grid;
    grid-template-columns: 60px 54px 53px 60px 47px 53px 53px 47px 47px 47px 40px;
    padding-left: 80px;
    margin-bottom: 2px;
}
.names .short {
    padding-left: 7px;
}
.row {
    display: grid;
    grid-template-columns: 88px 53px 60px 53px 54px 53px 53px 47px 47px 46px 47px 33px;
    margin-bottom: 6px;
}
.row label {
    padding-top: 1px;
}
fieldset {
    min-width: 0;
    margin: 13px 5px 0 1px;
    padding: 15px 0 12px 5px;
    border: 1px solid #666;
    border-top-color: #333;
    border-right: 0;
}
legend {
    margin-left: 307px;
    padding: 0 5px;
    line-height: 12px;
}
legend span {
    display: block;
    background: #7ff5f5;
}
fieldset .row {
    grid-template-columns: 81px 53px 60px 53px 54px 53px 53px 47px 47px 46px 47px 33px;
    margin-bottom: 13px;
}
fieldset .row:last-child {
    margin-bottom: 0;
}
.bottom {
    display: flex;
    position: relative;
    margin-top: -14px;
    pointer-events: none;
}
.bottom > * {
    pointer-events: auto;
}
.coeffs {
    display: grid;
    grid-template-columns: 87px 80px;
    gap: 6px 0;
    margin: 20px 7px 0 0;
}
.coeffs label {
    padding-top: 1px;
}
.coeffs input {
    width: 80px;
}
.run {
    padding: 0 6px;
    background: #efefef;
}
.run button {
    width: 81px;
    height: 41px;
    background: #efefef;
    border: 2px solid;
    border-color: #fff #888 #888 #fff;
}
.notes {
    display: flex;
    margin-left: 26px;
    padding-top: 6px;
    line-height: 13px;
}
.notes-head {
    width: 41px;
    height: 13px;
    padding-left: 7px;
    background: #efefef;
}
.notes p span {
    display: inline-block;
    padding-right: 5px;
    background: #efefef;
}
.cursor {
    position: absolute;
    left: 57px;
    top: 208px;
    width: 8px;
    height: 13px;
}

/* Taskbar */
.taskbar {
    display: flex;
    height: 33px;
    background: linear-gradient(90deg, #1e2a35, #1f2933 70%, #36373b);
    color: #fff;
}
.start {
    width: 40px;
    display: grid;
    place-items: center;
    background: #35353c;
}
.start svg {
    width: 14px;
    height: 14px;
}
.task-search {
    display: flex;
    align-items: center;
    gap: 8px;
    width: 286px;
    padding-left: 10px;
    background: #f1f1f1;
    color: #222;
    font-size: 13px;
}
.task-search svg {
    width: 14px;
    height: 14px;
}
.task-search input {
    flex: 1;
    min-width: 0;
}
.task-search input::placeholder {
    color: #444;
}
.apps {
    display: flex;
    width: 622px;
}
.apps button {
    flex: 1;
    display: grid;
    place-items: center;
    position: relative;
}
.apps svg {
    width: 20px;
    height: 20px;
}
.apps .open::after {
    content: "";
    position: absolute;
    bottom: 0;
    left: 4px;
    right: 4px;
    height: 2px;
    background: #76e3ea;
}
.apps .active {
    background: #4a4e58;
}
.apps .music {
    background: linear-gradient(90deg, transparent 4px, #74712f 4px, #74712f 25px, #383f47 25px, #383f47 38px, transparent 38px);
}
.apps .music::after {
    background: #ff0;
}
.logo-g, .logo-pdf {
    fill: #fff;
    font-size: 11px;
    font-weight: bold;
    text-anchor: middle;
}
.logo-pdf {
    font-size: 6px;
}
.tray {
    display: flex;
    align-items: center;
    gap: 6px;
    margin-left: auto;
    padding-right: 18px;
    border-right: 1px solid #777;
    margin-right: 2px;
}
.tray svg {
    width: 14px;
    height: 14px;
}
.ime {
    font-size: 13px;
}
.clock {
    width: 54px;
    text-align: center;
    line-height: 15px;
}
.tray .notice {
    margin-left: 8px;
}
```
